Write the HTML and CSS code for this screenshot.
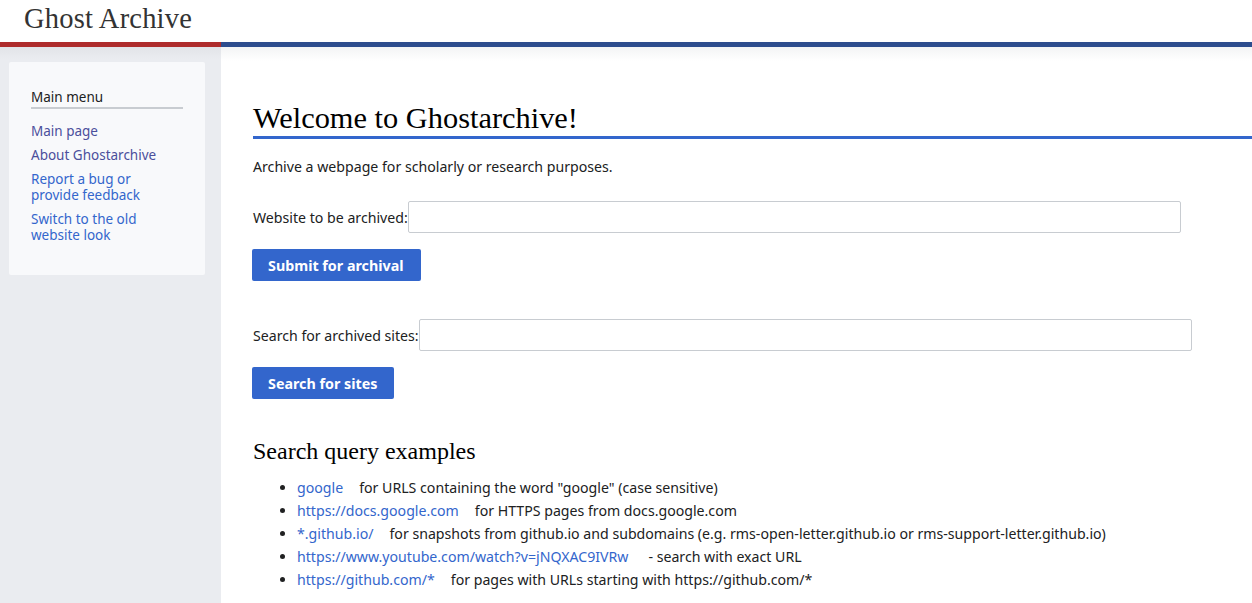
FILE: index.html
```html
<!DOCTYPE html>
<html>
<head>
<meta charset="utf-8">
<title>Ghost Archive</title>
<link rel="stylesheet" href="styles.css">
</head>
<body>
<header class="header">
  <div class="logo">Ghost Archive</div>
</header>
<div class="bar"><div class="bar-red"></div><div class="bar-blue"></div></div>
<div class="page">
  <aside class="sidebar">
    <div class="menu-box">
      <div class="menu-title">Main menu</div>
      <ul class="menu">
        <li><a class="visited" href="#">Main page</a></li>
        <li><a class="visited" href="#">About Ghostarchive</a></li>
        <li><a href="#">Report a bug or provide feedback</a></li>
        <li><a href="#">Switch to the old website look</a></li>
      </ul>
    </div>
  </aside>
  <main class="main">
    <h1 class="title">Welcome to Ghostarchive!</h1>
    <p class="intro">Archive a webpage for scholarly or research purposes.</p>
    <form class="form form-archive">
      <div class="field"><label>Website to be archived:</label><input class="input" type="text"></div>
      <button class="btn" type="button">Submit for archival</button>
    </form>
    <form class="form form-search">
      <div class="field"><label>Search for archived sites:</label><input class="input" type="text"></div>
      <button class="btn" type="button">Search for sites</button>
    </form>
    <h2 class="subtitle">Search query examples</h2>
    <ul class="examples">
      <li><a href="#">google</a><span class="desc">for URLS containing the word "google" (case sensitive)</span></li>
      <li><a href="#">https://docs.google.com</a><span class="desc">for HTTPS pages from docs.google.com</span></li>
      <li><a href="#">*.github.io/</a><span class="desc">for snapshots from github.io and subdomains (e.g. rms-open-letter.github.io or rms-support-letter.github.io)</span></li>
      <li><a href="#">https://www.youtube.com/watch?v=jNQXAC9IVRw</a><span class="desc wide">- search with exact URL</span></li>
      <li><a href="#">https://github.com/*</a><span class="desc">for pages with URLs starting with https://github.com/*</span></li>
    </ul>
  </main>
</div>
</body>
</html>
```
FILE: styles.css
```css
html, body {
  margin: 0;
  padding: 0;
  background: #fff;
}
body {
  font-family: "Noto Sans", "Open Sans", sans-serif;
  font-size: 14.15px;
  color: #202122;
}
a {
  color: #3366cc;
  text-decoration: none;
}
a.visited {
  color: #4b4f9c;
}
.header {
  height: 42px;
  padding-left: 24px;
  display: flex;
  align-items: center;
}
.logo {
  font-family: "Liberation Serif", serif;
  font-size: 28.5px;
  color: #333;
  letter-spacing: 0.2px;
  margin-top: -4px;
}
.bar {
  display: flex;
  height: 5px;
}
.bar-red {
  width: 221px;
  background: #ae2b2b;
}
.bar-blue {
  flex: 1;
  background: #2d4d8e;
}
.page {
  display: flex;
  min-height: 556px;
}
.sidebar {
  width: 221px;
  flex: none;
  background: linear-gradient(#e2e4e8 0, #eaecf0 12px);
  padding: 15px 16px 0 9px;
  box-sizing: border-box;
}
.menu-box {
  background: #f8f9fb;
  border-radius: 2px;
  padding: 26px 22px 32px 22px;
  box-sizing: border-box;
  width: 196px;
}
.menu-title {
  font-size: 13.5px;
  line-height: 18px;
  color: #202122;
  padding-bottom: 1px;
  border-bottom: 2px solid #c8ccd1;
  width: 152px;
}
.menu {
  list-style: none;
  margin: 14px 0 0 0;
  padding: 0;
  width: 135px;
}
.menu li {
  font-size: 13.5px;
  line-height: 16px;
  margin-bottom: 8px;
}
.menu li:last-child {
  margin-bottom: 0;
}
.main {
  flex: 1;
  padding-left: 31px;
  background: linear-gradient(#f3f4f5 0, #fff 14px);
}
.title {
  font-family: "Liberation Serif", serif;
  font-weight: normal;
  font-size: 30.4px;
  line-height: 34px;
  margin: 54px 0 0 1px;
  padding-bottom: 1px;
  border-bottom: 3px solid #3366cc;
  color: #000;
}
.intro {
  margin: 18px 0 0 1px;
  line-height: 20px;
}
.form {
  display: flex;
  flex-direction: column;
  align-items: flex-start;
}
.form-archive {
  margin-top: 24px;
}
.form-search {
  margin-top: 38px;
}
.field {
  display: flex;
  align-items: center;
  height: 32px;
  padding-left: 1px;
}
.input {
  width: 773px;
  height: 32px;
  box-sizing: border-box;
  border: 1px solid #c8ccd1;
  border-radius: 2px;
  margin: 0;
  padding: 0 6px;
}
.btn {
  margin-top: 16px;
  height: 32px;
  padding: 0 17px 0 16px;
  background: #3366cc;
  color: #fff;
  border: none;
  border-radius: 2px;
  font-family: "Noto Sans", "Open Sans", sans-serif;
  font-weight: bold;
  font-size: 14.3px;
}
.subtitle {
  font-family: "Liberation Serif", serif;
  font-weight: normal;
  font-size: 24px;
  line-height: 28px;
  margin: 38px 0 0 1px;
  color: #000;
}
.examples {
  margin: 11px 0 0 0;
  padding-left: 45px;
}
.examples li {
  line-height: 23px;
}
.desc {
  margin-left: 16px;
  color: #202122;
}
.desc.wide {
  margin-left: 20px;
}
```
